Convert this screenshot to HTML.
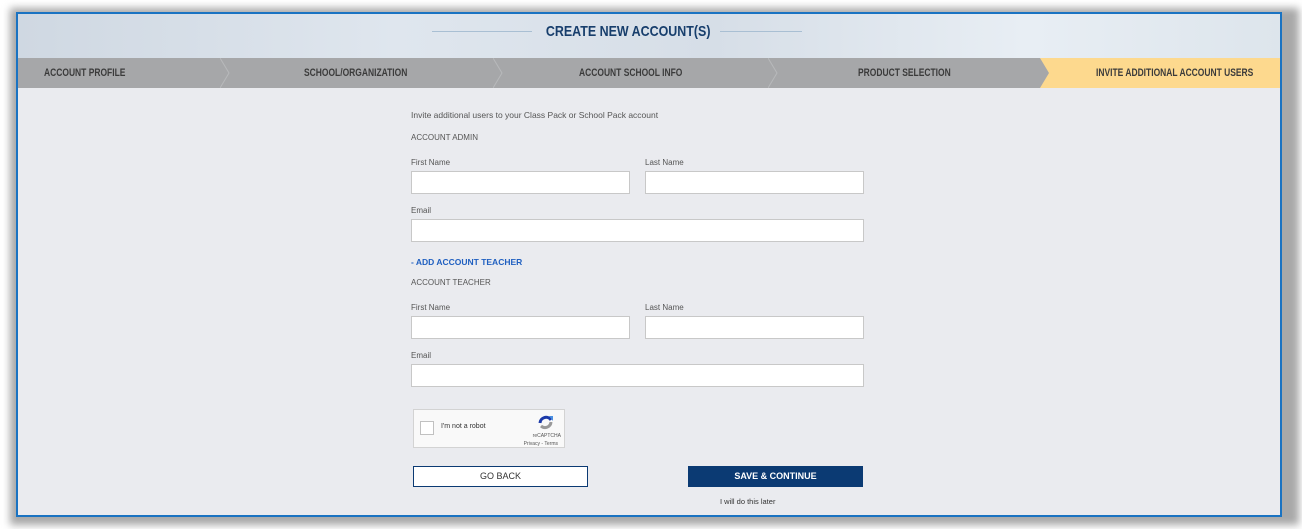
<!DOCTYPE html>
<html><head><meta charset="utf-8"><style>
*{margin:0;padding:0;box-sizing:border-box}
body{width:1302px;height:529px;background:#fff;position:relative;overflow:hidden;font-family:"Liberation Sans",sans-serif}
.shadow{position:absolute;left:10px;top:8px;width:1289px;height:517px;background:#a8a8a8;filter:blur(4px)}
.panel{position:absolute;left:16px;top:12px;width:1266px;height:505px;background:#eaebef;border:2px solid #1a73c2;overflow:hidden}
.hdr{position:absolute;left:0;top:0;width:100%;height:45px;background:linear-gradient(90deg,#cfd8e2,#dfe6ee 30%,#d6dee7 55%,#e8eef4 80%,#dde5ec)}
.hdr .t{position:absolute;left:528px;width:164px;top:9px;text-align:center;font:bold 15px "Liberation Sans",sans-serif;color:#173e6c;white-space:nowrap;display:flex;justify-content:center}
.hdr .t b{display:inline-block;transform:scaleX(.83)}
.hdr .l1{position:absolute;left:414px;width:100px;top:17px;height:1px;background:#a9bfd3}
.hdr .l2{position:absolute;left:702px;width:82px;top:17px;height:1px;background:#a9bfd3}
.steps{position:absolute;left:0;top:44px;width:100%;height:30px;background:#a6a7a9}
.steps span{position:absolute;top:9px;font:bold 11px "Liberation Sans",sans-serif;color:#3b3b3b;transform:scaleX(.77);transform-origin:left;white-space:nowrap}
.act{position:absolute;left:1022px;top:0;width:250px;height:30px;background:#fdd98e;clip-path:polygon(0 0,100% 0,100% 100%,0 100%,9px 50%)}
.sep{position:absolute;top:0;width:10px;height:30px}
.a{position:absolute;font-size:8px;color:#555}
.inp{position:absolute;background:#fff;border:1px solid #c8c8c8;height:23px}
</style></head><body>
<div class="shadow"></div>
<div class="panel">
 <div class="hdr"><div class="l1"></div><div class="l2"></div><div class="t"><b>CREATE NEW ACCOUNT(S)</b></div></div>
 <div class="steps">
  <div class="act"></div>
  <svg class="sep" style="left:202px" viewBox="0 0 10 30"><path d="M0 0L9 15L0 30" stroke="#b8b9bb" fill="none"/></svg>
  <svg class="sep" style="left:475px" viewBox="0 0 10 30"><path d="M0 0L9 15L0 30" stroke="#b8b9bb" fill="none"/></svg>
  <svg class="sep" style="left:750px" viewBox="0 0 10 30"><path d="M0 0L9 15L0 30" stroke="#b8b9bb" fill="none"/></svg>
  <span style="left:26px">ACCOUNT PROFILE</span>
  <span style="left:286px">SCHOOL/ORGANIZATION</span>
  <span style="left:561px">ACCOUNT SCHOOL INFO</span>
  <span style="left:840px">PRODUCT SELECTION</span>
  <span style="left:1078px">INVITE ADDITIONAL ACCOUNT USERS</span>
 </div>
</div>
<div class="a" style="left:411px;top:110px;font-size:8.5px">Invite additional users to your Class Pack or School Pack account</div>
<div class="a" style="left:411px;top:133px">ACCOUNT ADMIN</div>
<div class="a" style="left:411px;top:158px">First Name</div>
<div class="a" style="left:645px;top:158px">Last Name</div>
<div class="inp" style="left:411px;top:171px;width:219px"></div>
<div class="inp" style="left:645px;top:171px;width:219px"></div>
<div class="a" style="left:411px;top:206px">Email</div>
<div class="inp" style="left:411px;top:219px;width:453px"></div>
<div class="a" style="left:411px;top:257px;font-size:8.5px;color:#1f5fc0;font-weight:bold">- ADD ACCOUNT TEACHER</div>
<div class="a" style="left:411px;top:278px">ACCOUNT TEACHER</div>
<div class="a" style="left:411px;top:303px">First Name</div>
<div class="a" style="left:645px;top:303px">Last Name</div>
<div class="inp" style="left:411px;top:316px;width:219px"></div>
<div class="inp" style="left:645px;top:316px;width:219px"></div>
<div class="a" style="left:411px;top:351px">Email</div>
<div class="inp" style="left:411px;top:364px;width:453px"></div>
<div style="position:absolute;left:413px;top:409px;width:152px;height:39px;background:#f9f9f9;border:1px solid #d3d3d3">
 <div style="position:absolute;left:6px;top:11px;width:14px;height:14px;background:#fff;border:1px solid #c1c1c1"></div>
 <div style="position:absolute;left:27px;top:13px;font-size:7px;color:#333">I'm not a robot</div>
 <svg style="position:absolute;left:123px;top:4px" width="17" height="17" viewBox="0 0 17 17"><path d="M3 9a6 6 0 0 1 11-3" stroke="#1c3aa9" stroke-width="3" fill="none"/><path d="M14 8a6 6 0 0 1-10 4" stroke="#999" stroke-width="3" fill="none"/><path d="M12 2l4 0 0 5z" fill="#4a90e2"/></svg>
 <div style="position:absolute;right:3px;top:23px;font-size:5px;color:#555">reCAPTCHA</div>
 <div style="position:absolute;right:6px;top:31px;font-size:5px;color:#555">Privacy - Terms</div>
</div>
<div style="position:absolute;left:413px;top:466px;width:175px;height:21px;border:1px solid #0b3a73;background:#fff;text-align:center;font-size:9px;line-height:19px;color:#333">GO BACK</div>
<div style="position:absolute;left:688px;top:466px;width:175px;height:21px;background:#0b3a73;text-align:center;font-size:9px;font-weight:bold;line-height:20px;color:#fff">SAVE &amp; CONTINUE</div>
<div class="a" style="left:720px;top:497px;font-size:7.5px;color:#333">I will do this later</div>
</body></html>
